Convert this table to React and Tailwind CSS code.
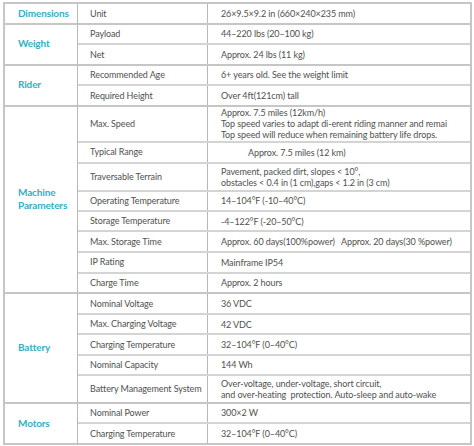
import React from "react";

const sections = [
  {
    label: ["Dimensions"],
    rows: [["Unit", ["26×9.5×9.2 in (660×240×235 mm)"], 20.6]],
  },
  {
    label: ["Weight"],
    rows: [
      ["Payload", ["44–220 lbs (20–100 kg)"], 20.7],
      ["Net", ["Approx. 24 lbs (11 kg)"], 20.3],
    ],
  },
  {
    label: ["Rider"],
    rows: [
      ["Recommended Age", ["6+ years old. See the weight limit"], 20.4],
      ["Required Height", ["Over 4ft(121cm) tall"], 20.6],
    ],
  },
  {
    label: ["Machine", "Parameters"],
    rows: [
      [
        "Max. Speed",
        [
          "Approx. 7.5 miles (12km/h)",
          "Top speed varies to adapt di-erent riding manner and remai",
          "Top speed will reduce when remaining battery life drops.",
        ],
        36.2,
      ],
      ["Typical Range", ["Approx. 7.5 miles (12 km)"], 20.8, true],
      [
        "Traversable Terrain",
        ["Pavement, packed dirt, slopes < 10°,", "obstacles < 0.4 in (1 cm),gaps < 1.2 in (3 cm)"],
        28.4,
      ],
      ["Operating Temperature", ["14–104°F (-10–40°C)"], 20],
      ["Storage Temperature", ["-4–122°F (-20–50°C)"], 20.3],
      ["Max. Storage Time", ["Approx. 60 days(100%power)\u00a0\u00a0\u00a0Approx. 20 days(30 %power)"], 20.7],
      ["IP Rating", ["Mainframe IP54"], 20.6],
      ["Charge Time", ["Approx. 2 hours"], 20.6],
    ],
  },
  {
    label: ["Battery"],
    rows: [
      ["Nominal Voltage", ["36 VDC"], 20.9],
      ["Max. Charging Voltage", ["42 VDC"], 20.3],
      ["Charging Temperature", ["32–104°F (0–40°C)"], 20.7],
      ["Nominal Capacity", ["144 Wh"], 20],
      [
        "Battery Management System",
        ["Over-voltage, under-voltage, short circuit,", "and over-heating\u00a0 protection. Auto-sleep and auto-wake"],
        27.7,
      ],
    ],
  },
  {
    label: ["Motors"],
    rows: [
      ["Nominal Power", ["300×2 W"], 20.6],
      ["Charging Temperature", ["32–104°F (0–40°C)"], 20.7],
    ],
  },
];

export default function App() {
  return (
    <div
      className="w-[474px] h-[446px] bg-white pl-[3px] pt-[2px] text-[#505050]"
      style={{ fontFamily: "Lato, 'Open Sans', sans-serif" }}
    >
      <div className="w-[469px] border-2 border-b-0 border-[#c6c6c6]">
        {sections.map((s, si) => (
          <div key={si} className="flex">
            <div className="w-[73px] shrink-0 border-r border-b-2 border-r-[#b8b8b8] border-b-[#c6c6c6] flex flex-col justify-center pl-[13px] text-[10px] leading-[13.5px] tracking-[-0.15px] font-bold text-[#2fb1c5]">
              {s.label.map((l) => (
                <div key={l}>{l}</div>
              ))}
            </div>
            <div className="flex-1 flex flex-col">
              {s.rows.map(([name, vals, h, indent], ri) => (
                <div
                  key={ri}
                  className={`flex border-b-2 ${ri < s.rows.length - 1 ? "border-[#d4d4d4]" : "border-[#c6c6c6]"}`}
                  style={{ height: h }}
                >
                  <div className="w-[130px] shrink-0 border-r border-[#b8b8b8] flex items-center pl-[12px] text-[9px] tracking-[-0.1px]">
                    {name}
                  </div>
                  <div
                    className={`flex-1 flex flex-col justify-center text-[9px] leading-[11px] tracking-[-0.1px] whitespace-nowrap overflow-hidden ${indent ? "pl-[40px]" : "pl-[13px]"}`}
                  >
                    {vals.map((v, i) => (
                      <div key={i}>{v}</div>
                    ))}
                  </div>
                </div>
              ))}
            </div>
          </div>
        ))}
      </div>
    </div>
  );
}
